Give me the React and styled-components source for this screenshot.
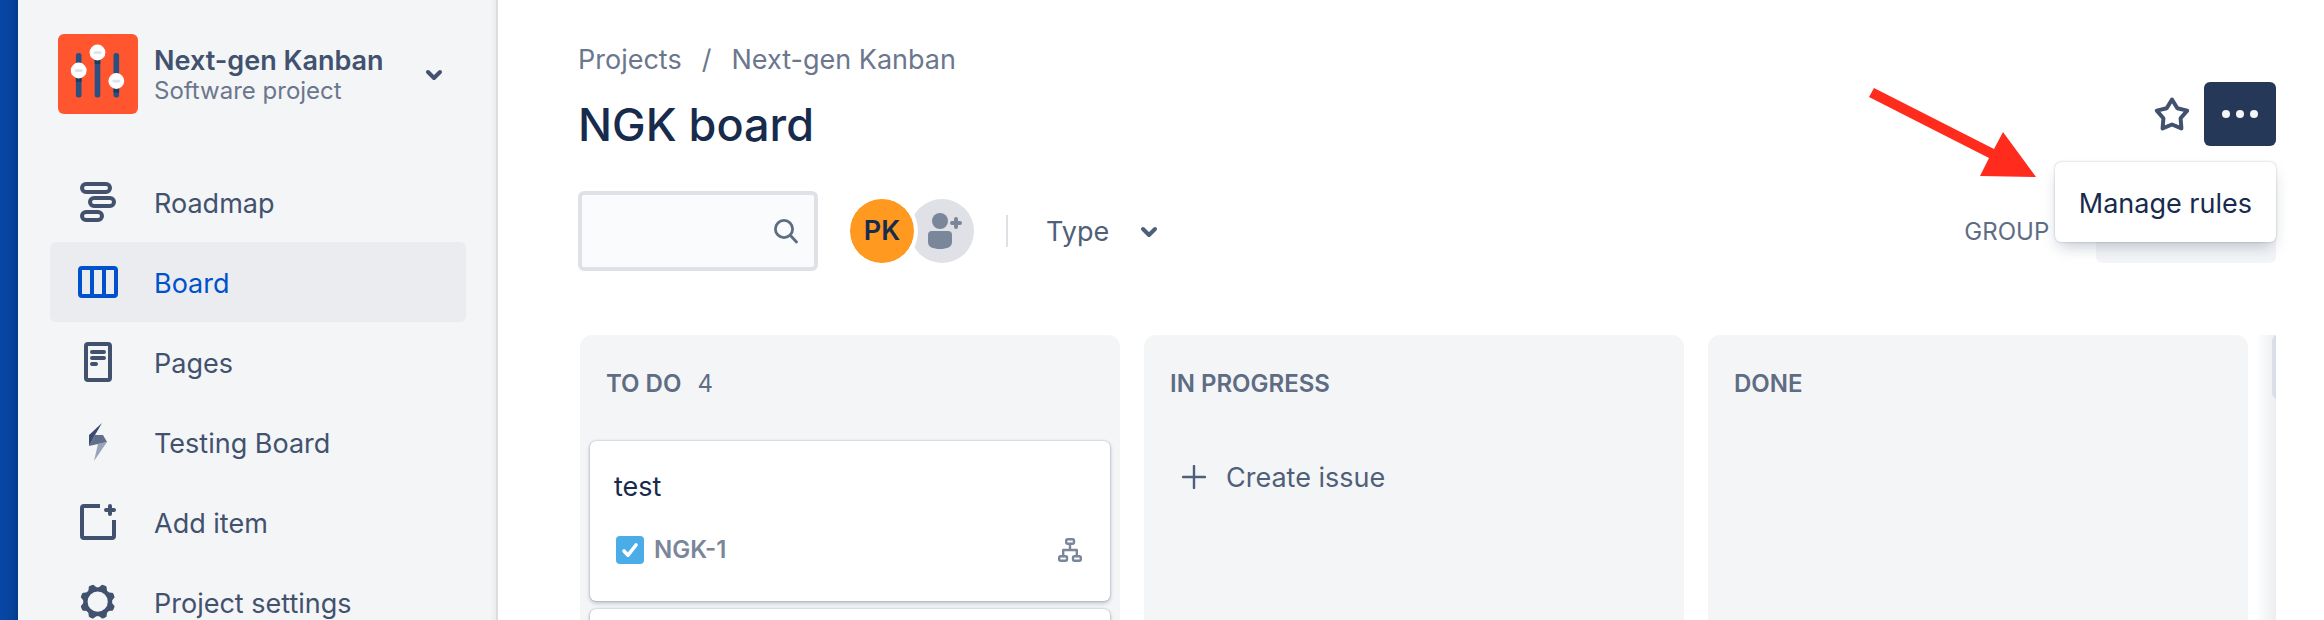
import React from 'react';
import styled, { createGlobalStyle } from 'styled-components';

const GlobalStyle = createGlobalStyle`
	* {
		box-sizing: border-box;
	}
	body {
		margin: 0;
		background: #fff;
		color: #172b4d;
		font-family: Inter, "Liberation Sans", sans-serif;
		font-size: 27px;
	}
	button,
	input,
	select {
		font: inherit;
		color: inherit;
		border: 0;
		margin: 0;
		padding: 0;
		background: none;
	}
	h1,
	h2,
	h3,
	p,
	ul,
	ol {
		margin: 0;
		padding: 0;
		font-weight: 400;
		list-style: none;
	}
	svg {
		display: block;
		flex: none;
	}
`;

const Shell = styled.div`
	display: flex;
	height: 100vh;
	overflow: hidden;
`;

const Rail = styled.div`
	flex: none;
	width: 18px;
	background: linear-gradient(to right, #0747a6, #06439d 12px, #053a88);
`;

const Sidebar = styled.aside`
	flex: none;
	width: 480px;
	padding: 34px 30px 0 32px;
	background: linear-gradient(to left, #ebecee, #f4f5f7 6px);
	border-right: 2px solid #dddddd;
`;

const ProjectSwitcher = styled.button`
	display: flex;
	align-items: center;
	width: 100%;
	height: 80px;
	margin-bottom: 48px;
	padding: 0 20px 0 8px;
	text-align: left;
	color: #42526e;
`;

const ProjectText = styled.span`
	flex: 1;
	display: flex;
	flex-direction: column;
	padding: 2px 0 0 16px;
`;

const ProjectName = styled.span`
	font-weight: 600;
	line-height: 32px;
`;

const ProjectType = styled.span`
	font-size: 24px;
	line-height: 28px;
	color: #6b778c;
`;

const NavLink = styled.a`
	display: flex;
	align-items: center;
	gap: 32px;
	height: 80px;
	padding-left: 24px;
	border-radius: 6px;
	text-decoration: none;
	color: ${(props) => (props.$active ? '#0052cc' : '#42526e')};
	background: ${(props) => (props.$active ? '#ebecf0' : 'transparent')};
`;

const NavLabel = styled.span`
	padding-top: 2px;
`;

const Main = styled.main`
	flex: 1;
	min-width: 0;
	display: flex;
	flex-direction: column;
	padding: 40px 48px 0 80px;
`;

const Breadcrumbs = styled.ol`
	display: flex;
	gap: 20px;
	margin-bottom: 2px;
	line-height: 40px;
	color: #6b778c;
`;

const CrumbLink = styled.a`
	color: inherit;
	text-decoration: none;
`;

const TitleRow = styled.header`
	display: flex;
	justify-content: space-between;
	align-items: flex-start;
	margin-bottom: 23px;
`;

const Title = styled.h1`
	font-size: 45px;
	font-weight: 500;
	line-height: 86px;
`;

const Actions = styled.div`
	position: relative;
	z-index: 2;
	display: flex;
	align-items: center;
	gap: 8px;
`;

const StarButton = styled.button`
	color: #42526e;
`;

const MoreButton = styled.button`
	display: flex;
	align-items: center;
	justify-content: center;
	width: 72px;
	height: 64px;
	border-radius: 6px;
	background: #253858;
	color: #f4f5f7;
`;

const Menu = styled.div`
	position: absolute;
	top: 80px;
	right: 0;
	border-radius: 6px;
	background: #fff;
	box-shadow: 0 8px 16px -4px rgba(9, 30, 66, 0.25), 0 0 2px rgba(9, 30, 66, 0.31);
`;

const MenuItem = styled.button`
	height: 80px;
	padding: 2px 24px 0;
	white-space: nowrap;
`;

const Pointer = styled.svg`
	position: absolute;
	top: 4px;
	right: 238px;
`;

const Toolbar = styled.div`
	display: flex;
	align-items: center;
	height: 80px;
	margin-bottom: 64px;
`;

const SearchBox = styled.label`
	display: flex;
	align-items: center;
	width: 240px;
	height: 80px;
	padding: 0 14px;
	border: 4px solid #dfe1e6;
	border-radius: 6px;
	background: #fafbfc;
	color: #5e6c84;
`;

const SearchInput = styled.input`
	flex: 1;
	min-width: 0;
	outline: none;
`;

const Avatars = styled.div`
	display: flex;
	margin: 0 32px 0 28px;
`;

const Avatar = styled.span`
	position: relative;
	z-index: 1;
	width: 72px;
	height: 72px;
	border: 4px solid #fff;
	border-radius: 50%;
	background: #ff991f;
	background-clip: padding-box;
	font-weight: 600;
	line-height: 64px;
	text-align: center;
	box-shadow: inset 0 0 0 1px #ff991f;
`;

const AddPeople = styled.button`
	width: 64px;
	height: 64px;
	margin: 4px 0 0 -8px;
	border-radius: 50%;
	background: #dfe1e6;
	color: #7a869a;
`;

const Divider = styled.span`
	width: 2px;
	height: 32px;
	margin-right: 38px;
	background: #dfe1e6;
`;

const FilterButton = styled.button`
	display: flex;
	align-items: center;
	gap: 28px;
	color: #505f79;
`;

const GroupBy = styled.label`
	display: flex;
	align-items: center;
	margin-left: auto;
	font-size: 24px;
	color: #5e6c84;
`;

const GroupSelect = styled.select`
	appearance: none;
	width: 180px;
	height: 64px;
	margin-left: 8px;
	padding: 0 20px;
	border-radius: 6px;
	background: #f4f5f7;
`;

const BoardArea = styled.section`
	position: relative;
	flex: 1;
	min-height: 0;
	display: flex;
	gap: 24px;
	padding-left: 2px;
	overflow: hidden;

	&::after {
		content: '';
		position: absolute;
		top: 0;
		right: 0;
		bottom: 0;
		width: 20px;
		background: linear-gradient(to right, rgba(9, 30, 66, 0), rgba(9, 30, 66, 0.08));
	}
`;

const Column = styled.section`
	flex: none;
	width: 540px;
	padding: 0 10px 10px;
	border-radius: 12px 12px 0 0;
	background: #f4f5f7;
`;

const ColumnHeader = styled.div`
	display: flex;
	gap: 16px;
	padding: 0 16px 8px;
	font-size: 24px;
	line-height: 98px;
	color: #5e6c84;
`;

const ColumnTitle = styled.h2`
	font-size: 24px;
	font-weight: 600;
	text-transform: uppercase;
`;

const Card = styled.article`
	height: 160px;
	margin-bottom: 8px;
	padding: 26px 28px 0 24px;
	border-radius: 6px;
	background: #fff;
	line-height: 40px;
	box-shadow: 0 2px 4px rgba(9, 30, 66, 0.25), 0 0 2px rgba(9, 30, 66, 0.31);
`;

const CardFooter = styled.div`
	display: flex;
	align-items: center;
	gap: 10px;
	margin-top: 23px;
	padding-left: 2px;
	color: #7a869a;
`;

const CardKey = styled.span`
	flex: 1;
	font-size: 24px;
	font-weight: 600;
`;

const CreateButton = styled.button`
	display: flex;
	align-items: center;
	gap: 20px;
	height: 72px;
	padding: 0 28px;
	color: #505f79;
`;

const AddColumn = styled.button`
	flex: none;
	width: 64px;
	height: 64px;
	border-radius: 6px;
	background: #ebecf4;
`;

const Glyph = ({ size = 48, width = 4, children }) => (
	<svg
		width={size}
		height={size}
		viewBox={`0 0 ${size} ${size}`}
		fill="none"
		stroke="currentColor"
		strokeWidth={width}
		strokeLinecap="round"
		strokeLinejoin="round"
		aria-hidden="true"
	>
		{children}
	</svg>
);

const ChevronDown = () => (
	<Glyph size={24}>
		<path d="M6 10l6 6 6-6" />
	</Glyph>
);

const Plus = () => (
	<Glyph size={24} width={2.4}>
		<path d="M12 1v22M1 12h22" />
	</Glyph>
);

const sliders = [
	{ x: 20.7, y: 36.5 },
	{ x: 39.5, y: 18.5 },
	{ x: 58.3, y: 47 },
];

const ProjectLogo = () => (
	<svg width="80" height="80" viewBox="0 0 80 80" aria-hidden="true">
		<rect width="80" height="80" rx="6" fill="#ff5630" />
		{sliders.map(({ x, y }) => (
			<g key={x}>
				<rect x={x - 2.8} y="19" width="5.6" height="44.5" rx="2.5" fill="#2a5082" />
				<rect x={x - 2.8} y={y + 5} width="5.6" height="6.5" fill="#173f5f" />
				<circle cx={x} cy={y} r="7.9" fill="#fff" />
				<rect x={x - 4} y={y - 1.2} width="8" height="2.6" rx="1.3" fill="#dce3ec" />
			</g>
		))}
	</svg>
);

const RoadmapIcon = () => (
	<Glyph>
		<rect x="8" y="6" width="28" height="8" rx="4" />
		<rect x="16" y="20" width="24" height="8" rx="4" />
		<rect x="8" y="34" width="20" height="8" rx="4" />
	</Glyph>
);

const BoardIcon = () => (
	<Glyph>
		<rect x="6" y="10" width="36" height="28" rx="2" />
		<path d="M18 10v28M30 10v28" />
	</Glyph>
);

const PageIcon = () => (
	<Glyph>
		<rect x="12" y="6" width="24" height="36" rx="2" />
		<path d="M18 14h12M18 20h12M18 26h4" />
	</Glyph>
);

const BoltIcon = () => (
	<svg width="48" height="48" viewBox="0 0 48 48" aria-hidden="true">
		<path d="M24 26l9-2-13 19z" fill="#9aa3b8" />
		<path d="M21 17h8l4 7-18 4z" fill="#626f8c" />
		<path d="M28 5L15 17v11l6-11z" fill="#3b4a70" />
	</svg>
);

const AddItemIcon = () => (
	<Glyph>
		<path d="M26 8H10a2 2 0 0 0-2 2v28a2 2 0 0 0 2 2h28a2 2 0 0 0 2-2V22" strokeLinecap="butt" />
		<path d="M36 8v8M32 12h8" />
	</Glyph>
);

const teeth = [0, 1, 2, 3, 4, 5, 6, 7];

const GearIcon = () => (
	<svg width="48" height="48" viewBox="0 0 48 48" fill="currentColor" aria-hidden="true">
		<circle cx="23.7" cy="23.7" r="12.3" fill="none" stroke="currentColor" strokeWidth="4.4" />
		{teeth.map((n) => (
			<path
				key={n}
				d="M19 10.5l1.7-3a1.6 1.6 0 0 1 1.5-1.3h3a1.6 1.6 0 0 1 1.5 1.3l1.7 3z"
				transform={`rotate(${n * 45 + 22.5} 23.7 23.7)`}
			/>
		))}
	</svg>
);

const HierarchyIcon = () => (
	<Glyph size={24} width={2.4}>
		<rect x="8.2" y="1.2" width="7.8" height="4.6" rx="1.5" />
		<rect x="1.2" y="18.2" width="7.8" height="4.6" rx="1.5" />
		<rect x="15" y="18.2" width="7.8" height="4.6" rx="1.5" />
		<path d="M12 6v6M5.2 18v-6h13.6v6" />
	</Glyph>
);

const TaskIcon = () => (
	<svg width="28" height="28" viewBox="0 0 28 28" aria-hidden="true">
		<rect width="28" height="28" rx="4" fill="#4bade8" />
		<path d="M8 15l4 4.2L20 9" fill="none" stroke="#fff" strokeWidth="3.6" strokeLinecap="round" strokeLinejoin="round" />
	</svg>
);

const navItems = [
	{ label: 'Roadmap', icon: RoadmapIcon },
	{ label: 'Board', icon: BoardIcon, active: true },
	{ label: 'Pages', icon: PageIcon },
	{ label: 'Testing Board', icon: BoltIcon },
	{ label: 'Add item', icon: AddItemIcon },
	{ label: 'Project settings', icon: GearIcon },
];

const columns = [
	{
		title: 'To do',
		count: 4,
		cards: [
			{ id: 'NGK-1', summary: 'test' },
			{ id: 'NGK-2', summary: 'test' },
		],
	},
	{ title: 'In progress', cards: [], canCreate: true },
	{ title: 'Done', cards: [] },
];

const ProjectNav = () => (
	<Sidebar>
		<ProjectSwitcher>
			<ProjectLogo />
			<ProjectText>
				<ProjectName>Next-gen Kanban</ProjectName>
				<ProjectType>Software project</ProjectType>
			</ProjectText>
			<ChevronDown />
		</ProjectSwitcher>
		<nav>
			{navItems.map(({ label, icon: Icon, active }) => (
				<NavLink key={label} href="#" $active={active}>
					<Icon />
					<NavLabel>{label}</NavLabel>
				</NavLink>
			))}
		</nav>
	</Sidebar>
);

const BoardColumn = ({ title, count, cards, canCreate }) => (
	<Column>
		<ColumnHeader>
			<ColumnTitle>{title}</ColumnTitle>
			{count && <span>{count}</span>}
		</ColumnHeader>
		{cards.map(({ id, summary }) => (
			<Card key={id}>
				<p>{summary}</p>
				<CardFooter>
					<TaskIcon />
					<CardKey>{id}</CardKey>
					<HierarchyIcon />
				</CardFooter>
			</Card>
		))}
		{canCreate && (
			<CreateButton>
				<Plus />
				Create issue
			</CreateButton>
		)}
	</Column>
);

const App = () => (
	<>
		<GlobalStyle />
		<Shell>
			<Rail />
			<ProjectNav />
			<Main>
				<Breadcrumbs>
					<li><CrumbLink href="#">Projects</CrumbLink></li>
					<li aria-hidden="true">/</li>
					<li><CrumbLink href="#">Next-gen Kanban</CrumbLink></li>
				</Breadcrumbs>
				<TitleRow>
					<Title>NGK board</Title>
					<Actions>
						<StarButton aria-label="Star board">
							<Glyph>
								<path d="M24 9.5l5.3 8.7 9.9 2.4-6.6 7.7.8 10.1-9.4-3.9-9.4 3.9.8-10.1-6.6-7.7 9.9-2.4z" />
							</Glyph>
						</StarButton>
						<MoreButton aria-label="More actions">
							<svg width="48" height="48" viewBox="0 0 48 48" fill="currentColor" aria-hidden="true">
								<circle cx="10" cy="24" r="4" />
								<circle cx="24" cy="24" r="4" />
								<circle cx="38" cy="24" r="4" />
							</svg>
						</MoreButton>
						<Menu>
							<MenuItem>Manage rules</MenuItem>
						</Menu>
						<Pointer width="170" height="92" viewBox="0 0 170 92" aria-hidden="true">
							<path d="M6 2l120 61 9-17 33 45-56-1 9-18L1 11z" fill="#ff2b1d" />
						</Pointer>
					</Actions>
				</TitleRow>
				<Toolbar>
					<SearchBox>
						<SearchInput type="text" aria-label="Search board" />
						<Glyph size={28} width={2.8}>
							<circle cx="12" cy="12" r="8.6" />
							<path d="M18.5 18.5l6 6.5" />
						</Glyph>
					</SearchBox>
					<Avatars>
						<Avatar>PK</Avatar>
						<AddPeople aria-label="Add people">
							<svg width="64" height="64" viewBox="0 0 64 64" fill="currentColor" aria-hidden="true">
								<circle cx="30" cy="22" r="8" />
								<path d="M22 32h16a4 4 0 0 1 4 4v7c0 5-5 7-12 7s-12-2-12-7v-7a4 4 0 0 1 4-4z" />
								<path d="M46 20v8M42 24h8" stroke="currentColor" strokeWidth="4" strokeLinecap="round" />
							</svg>
						</AddPeople>
					</Avatars>
					<Divider />
					<FilterButton>
						Type
						<ChevronDown />
					</FilterButton>
					<GroupBy>
						GROUP BY
						<GroupSelect defaultValue="None">
							<option>None</option>
						</GroupSelect>
					</GroupBy>
				</Toolbar>
				<BoardArea>
					{columns.map((column) => (
						<BoardColumn key={column.title} {...column} />
					))}
					<AddColumn aria-label="Add column" />
				</BoardArea>
			</Main>
		</Shell>
	</>
);

export default App;
